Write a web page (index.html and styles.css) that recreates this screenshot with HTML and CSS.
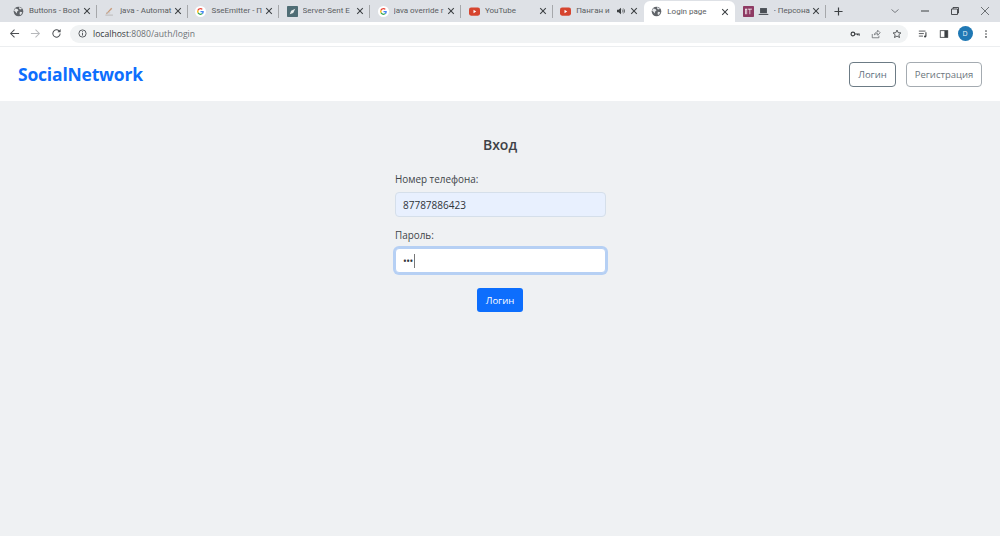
FILE: index.html
```html
<!DOCTYPE html>
<html lang="ru">
<head>
<meta charset="utf-8">
<title>Login page</title>
<link rel="stylesheet" href="styles.css">
</head>
<body>
<svg class="defs" width="0" height="0" aria-hidden="true">
  <defs>
    <symbol id="globe" viewBox="0 0 16 16">
      <circle cx="8" cy="8" r="7" fill="#5f6368"/>
      <path d="M3 3.5l3.5 1 1.5 2-2 1.5-.5 3-2-2.500-2-1.500zM9 1.500l4 2-1.500 1.500-2.500-.5zM10 8.500l3.500.5-2 4-2-1z" fill="#e3e5e8"/>
    </symbol>
    <symbol id="gmark" viewBox="0 0 16 16">
      <circle cx="8" cy="8" r="8" fill="#fff"/>
      <path d="M12.800 8.200c0-.4 0-.7-.1-1H8v1.900h2.700c-.1.600-.5 1.200-1 1.500l1.600 1.200c.9-.9 1.500-2.100 1.500-3.600z" fill="#4285f4"/>
      <path d="M8 13c1.300 0 2.400-.4 3.300-1.200l-1.600-1.200c-.4.300-1 .5-1.700.5-1.300 0-2.400-.9-2.800-2l-1.600 1.200C4.400 11.900 6.100 13 8 13z" fill="#34a853"/>
      <path d="M5.200 9.100c-.2-.7-.2-1.400 0-2.100L3.600 5.700c-.7 1.400-.7 3.100 0 4.600z" fill="#fbbc05"/>
      <path d="M8 4.900c.7 0 1.400.3 1.900.7l1.400-1.400C10.400 3.400 9.200 3 8 3 6.100 3 4.400 4.100 3.600 5.700L5.200 7c.4-1.200 1.500-2.100 2.800-2.100z" fill="#ea4335"/>
    </symbol>
    <symbol id="yt" viewBox="0 0 16 16">
      <rect x="0" y="2" width="16" height="12" rx="3" fill="#d6452f"/>
      <path d="M6.500 5.500v5l4-2.500z" fill="#fff"/>
    </symbol>
    <symbol id="close" viewBox="0 0 10 10">
      <path d="M1.500 1.500l7 7M8.500 1.500l-7 7" stroke="#3c4043" stroke-width="1.300" fill="none"/>
    </symbol>
  </defs>
</svg>

<div class="browser">
  <div class="tabstrip">
    <div class="tab sep"><svg class="fav"><use href="#globe"/></svg><span class="tab-title">Buttons - Boot</span><svg class="x"><use href="#close"/></svg></div>
    <div class="tab sep">
      <svg class="fav" viewBox="0 0 16 16"><path d="M2 14h11v-1.500H2z" fill="#bcbbbb"/><path d="M3 11l1 1 8-8-1.500-1.500z" fill="#c99a78"/><path d="M3 9.500h6v1H3z" fill="#bcbbbb"/></svg>
      <span class="tab-title">java - Automat</span><svg class="x"><use href="#close"/></svg></div>
    <div class="tab sep"><svg class="fav"><use href="#gmark"/></svg><span class="tab-title">SseEmitter - П</span><svg class="x"><use href="#close"/></svg></div>
    <div class="tab sep">
      <svg class="fav" viewBox="0 0 16 16"><rect width="16" height="16" rx="1" fill="#4f6d75"/><path d="M4 12l2-5 6-3-3 6z" fill="#e8ecec"/></svg>
      <span class="tab-title">Server-Sent E</span><svg class="x"><use href="#close"/></svg></div>
    <div class="tab sep"><svg class="fav"><use href="#gmark"/></svg><span class="tab-title">java override r</span><svg class="x"><use href="#close"/></svg></div>
    <div class="tab sep"><svg class="fav"><use href="#yt"/></svg><span class="tab-title">YouTube</span><svg class="x"><use href="#close"/></svg></div>
    <div class="tab tab-audio">
      <svg class="fav"><use href="#yt"/></svg><span class="tab-title">Панган и</span>
      <svg class="speaker" viewBox="0 0 10 10"><path d="M0 3.500h2L5 1v8L2 6.500H0z" fill="#3c4043"/><path d="M6.500 3.200a2.200 2.200 0 0 1 0 3.600M8 2a4 4 0 0 1 0 6" stroke="#3c4043" fill="none"/></svg>
      <svg class="x"><use href="#close"/></svg></div>
    <div class="tab active"><svg class="fav"><use href="#globe"/></svg><span class="tab-title">Login page</span><svg class="x"><use href="#close"/></svg></div>
    <div class="tab sep">
      <svg class="fav" viewBox="0 0 16 16"><rect width="16" height="16" rx="1" fill="#8e3a63"/><path d="M3 4h3v8H5V5H4v7H3zM7 4h6v1h-2.500v7h-1V5H7z" fill="#fff"/></svg>
      <svg class="fav laptop" viewBox="0 0 16 16"><rect x="3" y="3" width="10" height="7.500" fill="#4a4f55"/><path d="M1 11.500h14V13H1z" fill="#4a4f55"/></svg>
      <span class="tab-title">- Персона</span><svg class="x"><use href="#close"/></svg></div>
    <svg class="plus" viewBox="0 0 10 10"><path d="M5 .5v9M.5 5h9" stroke="#3c4043" stroke-width="1.300"/></svg>
    <div class="win">
      <svg class="win-ico" viewBox="0 0 10 10"><path d="M1.500 3.500L5 6.500l3.500-3" stroke="#5f6368" fill="none" stroke-width=".8"/></svg>
      <svg class="win-ico" viewBox="0 0 10 10"><path d="M1 5h8" stroke="#3c4043"/></svg>
      <svg class="win-ico" viewBox="0 0 10 10"><path d="M1.500 3h6v5.500h-6zM3 3V1.500h5.500V7H7.500" stroke="#3c4043" fill="none" stroke-width=".9"/></svg>
      <svg class="win-ico" viewBox="0 0 10 10"><path d="M1 1l8 8M9 1l-8 8" stroke="#3c4043" stroke-width=".7"/></svg>
    </div>
  </div>

  <div class="toolbar">
    <svg class="nav-ico" viewBox="0 0 12 12"><path d="M11 6H2M6 1.800L1.800 6 6 10.200" stroke="#4a4d51" stroke-width="1.100" fill="none"/></svg>
    <svg class="nav-ico" viewBox="0 0 12 12"><path d="M1 6h9M6 1.800L10.200 6 6 10.200" stroke="#b6b8bb" stroke-width="1.100" fill="none"/></svg>
    <svg class="nav-ico" viewBox="0 0 12 12"><path d="M10 6a4 4 0 1 1-1.200-2.900" stroke="#4a4d51" stroke-width="1.100" fill="none"/><path d="M10.500 1v3.500H7z" fill="#4a4d51"/></svg>
    <div class="omnibox">
      <svg class="info" viewBox="0 0 10 10"><circle cx="5" cy="5" r="4" stroke="#4a4d51" fill="none"/><path d="M5 4.300v3M5 2.500v1" stroke="#4a4d51"/></svg>
      <span class="url">localhost<span class="url-dim">:8080/auth/login</span></span>
      <div class="omni-actions">
        <svg class="tool-ico" viewBox="0 0 12 12"><circle cx="3.500" cy="6" r="2.200" stroke="#3c4043" stroke-width="1.400" fill="none"/><path d="M5.500 6H11v2M9 6v1.500" stroke="#3c4043" stroke-width="1.300" fill="none"/></svg>
        <svg class="tool-ico" viewBox="0 0 12 12"><path d="M1.500 6v4.500h8V8M4 7c.3-2.200 2-3.500 4-3.500V1.500L11 4.500 8 7.500V5.500C6.500 5.500 5 6 4 7z" stroke="#5f6368" fill="none" stroke-width=".9"/></svg>
        <svg class="tool-ico" viewBox="0 0 12 12"><path d="M6 1.300l1.400 3.100 3.300.3-2.500 2.200.8 3.300L6 8.500 3 10.200l.8-3.300L1.300 4.700l3.300-.3z" stroke="#3c4043" fill="none"/></svg>
      </div>
    </div>
    <div class="tool-right">
      <svg class="tool-ico" viewBox="0 0 12 12"><path d="M1 2.500h8M1 5.500h6M1 8.500h5" stroke="#3c4043"/><path d="M9.500 4v5" stroke="#3c4043" stroke-width="1.300"/><circle cx="8.500" cy="9" r="1.300" fill="#3c4043"/></svg>
      <svg class="tool-ico" viewBox="0 0 12 12"><rect x="1.500" y="2" width="9" height="8" stroke="#3c4043" fill="none"/><rect x="6.500" y="2" width="4" height="8" fill="#3c4043"/></svg>
      <span class="avatar">D</span>
      <svg class="tool-ico" viewBox="0 0 12 12"><circle cx="6" cy="2.500" r="1" fill="#3c4043"/><circle cx="6" cy="6" r="1" fill="#3c4043"/><circle cx="6" cy="9.500" r="1" fill="#3c4043"/></svg>
    </div>
  </div>
</div>

<header class="navbar">
  <a class="brand" href="#">SocialNetwork</a>
  <nav class="nav-buttons">
    <a class="btn-outline btn-login" href="#">Логин</a>
    <a class="btn-outline btn-register" href="#">Регистрация</a>
  </nav>
</header>

<main class="page">
  <form class="login-form">
    <h1 class="title">Вход</h1>
    <div class="field">
      <label class="label" for="phone">Номер телефона:</label>
      <input class="input input-filled" id="phone" type="text" value="87787886423">
    </div>
    <div class="field">
      <label class="label" for="pass">Пароль:</label>
      <div class="input input-focus" id="pass"><span class="dots">•••</span><span class="caret"></span></div>
    </div>
    <button class="submit" type="button">Логин</button>
  </form>
</main>
</body>
</html>
```

FILE: styles.css
```css
* { box-sizing: border-box; }
html, body { margin: 0; height: 100%; }
body {
  background: #eff1f3;
  font-family: "Open Sans", "Noto Sans", sans-serif;
  overflow: hidden;
  display: flex;
  flex-direction: column;
}
.defs { position: absolute; }

.browser { flex: none; }
.tabstrip {
  height: 22px;
  background: #dee1e6;
  display: flex;
  align-items: center;
  padding-left: 5.500px;
}
.tab {
  flex: none;
  width: 91.200px;
  height: 22px;
  display: flex;
  align-items: center;
  padding: 0 6px 0 7.500px;
  gap: 5px;
  position: relative;
}
.tab.sep::after {
  content: "";
  position: absolute;
  right: 0;
  top: 5px;
  height: 13px;
  width: 1px;
  background: #a6a8ab;
}
.tab.active {
  background: #fff;
  border-radius: 6px 6px 0 0;
  height: 21px;
  margin-top: 1px;
}
.fav { width: 11px; height: 11px; flex: none; }
.laptop { margin-left: -1px; }
.tab-title {
  flex: 1;
  min-width: 0;
  font-family: Roboto, "Open Sans", sans-serif;
  font-size: 8px;
  line-height: 12px;
  color: #5a5d61;
  white-space: nowrap;
  overflow: hidden;
}
.speaker { width: 8px; height: 8px; flex: none; margin-left: -3px; }
.x { width: 8px; height: 8px; flex: none; margin-left: -3px; }
.speaker + .x { margin-left: 0; }
.plus { width: 9px; height: 9px; flex: none; margin-left: 7.500px; }
.win {
  margin-left: auto;
  display: flex;
  align-items: center;
  gap: 20px;
  padding-right: 10px;
}
.win-ico { width: 10px; height: 10px; flex: none; }

.toolbar {
  height: 25px;
  background: #fff;
  border-bottom: 1px solid #eceef0;
  display: flex;
  align-items: center;
  padding: 0 0 1px 9px;
  gap: 10px;
}
.nav-ico { width: 11px; height: 11px; flex: none; }
.omnibox {
  margin-left: -2px;
  width: 838px;
  height: 18px;
  border-radius: 9px;
  background: #f1f3f4;
  display: flex;
  align-items: center;
  padding-left: 8px;
  flex: none;
}
.info { width: 9px; height: 9px; flex: none; }
.url { font-size: 8.600px; margin-left: 6px; color: #35383c; }
.url-dim { color: #6f7276; }
.omni-actions {
  margin-left: auto;
  display: flex;
  gap: 11px;
  align-items: center;
  padding-right: 6px;
}
.tool-ico { width: 10px; height: 10px; flex: none; }
.tool-right {
  display: flex;
  align-items: center;
  gap: 8.500px;
}
.tool-right .tool-ico:nth-child(2) { margin-left: 2.500px; }
.avatar {
  width: 15px;
  height: 15px;
  border-radius: 50%;
  background: #1f78b4;
  color: #e8f2f8;
  font-size: 7px;
  display: flex;
  align-items: center;
  justify-content: center;
  flex: none;
}

.navbar {
  flex: none;
  height: 54px;
  background: #fff;
  display: flex;
  align-items: center;
  justify-content: space-between;
  padding: 0 18px 0;
}
.brand {
  font-size: 17.500px;
  font-weight: 700;
  color: #0d6efd;
  text-decoration: none;
  letter-spacing: -0.2px;
}
.nav-buttons { display: flex; gap: 10px; }
.btn-outline {
  height: 25px;
  display: flex;
  align-items: center;
  justify-content: center;
  border-radius: 4px;
  font-size: 9.500px;
  text-decoration: none;
  background: #fff;
}
.btn-login { width: 47px; color: #5c7080; border: 1px solid #6c7b85; }
.btn-register { width: 76px; color: #6c757d; border: 1px solid #a4abb1; }

.page { flex: 1; display: flex; justify-content: center; }
.login-form {
  width: 211px;
  margin-left: 1px;
  display: flex;
  flex-direction: column;
  padding-top: 33px;
}
.title {
  margin: 0 0 17px -1px;
  font-size: 14px;
  line-height: 21px;
  font-weight: 600;
  color: #3e4246;
  text-align: center;
}
.field { display: flex; flex-direction: column; margin-bottom: 11px; }
.label {
  font-size: 9.900px;
  line-height: 15px;
  margin-bottom: 5px;
  color: #3e4449;
}
.input {
  height: 25px;
  width: 211px;
  border-radius: 4px;
  font-family: inherit;
  font-size: 10px;
  color: #2f3439;
  padding: 0 7px;
  display: flex;
  align-items: center;
}
.input-filled { background: #e8f0fe; border: 1px solid #d5dfea; outline: none; }
.input-focus {
  background: #fff;
  border: 1px solid #b6d0f4;
  box-shadow: 0 0 0 2px #b6d0f4;
}
.dots { font-size: 10px; letter-spacing: -0.5px; }
.caret { width: 1px; height: 14px; background: #777; margin-left: 1px; }
.submit {
  align-self: center;
  margin-top: 4px;
  margin-left: -1px;
  width: 46px;
  height: 24px;
  border: 0;
  border-radius: 3px;
  background: #0d6efd;
  color: #fff;
  font-family: inherit;
  font-size: 9.500px;
  padding: 0;
}
```
